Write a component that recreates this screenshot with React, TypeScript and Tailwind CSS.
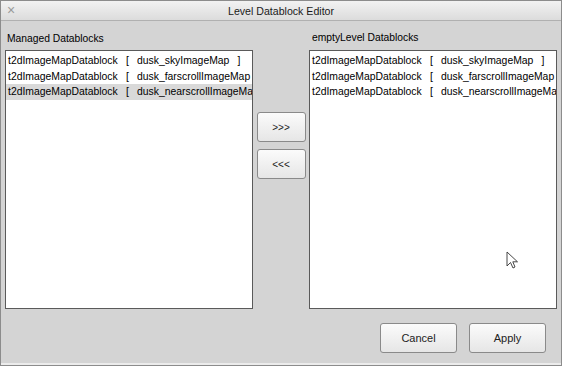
import React from 'react';

const rows = [
  't2dImageMapDatablock  [  dusk_skyImageMap  ]',
  't2dImageMapDatablock  [  dusk_farscrollImageMap  ]',
  't2dImageMapDatablock  [  dusk_nearscrollImageMap  ]',
];

const ListBox: React.FC<{ selected?: number }> = ({ selected }) => (
  <div className="h-[259px] w-[248px] overflow-hidden border border-[#5a5a5a] bg-white pt-[2px]">
    {rows.map((r, i) => (
      <div
        key={i}
        className={`h-[15.5px] whitespace-pre pl-[2px] text-[10.4px] leading-[15px] [word-spacing:1.2px] ${i === selected ? 'bg-[#d9d9d9]' : ''}`}
      >
        {r}
      </div>
    ))}
  </div>
);

const Btn: React.FC<{ label: string; className?: string }> = ({ label, className }) => (
  <button
    className={`rounded-[3px] border border-[#8a8a8a] bg-gradient-to-b from-[#fbfbfb] to-[#e6e6e6] text-[#222] ${className ?? ''}`}
  >
    {label}
  </button>
);

export default function App() {
  return (
    <div
      className="relative flex h-[366px] w-[562px] flex-col border border-[#8c8c8c] bg-[#d4d4d4] text-[10.3px] text-black"
      style={{ fontFamily: '"Liberation Sans", Arial, sans-serif' }}
    >
      {/* title bar */}
      <div className="relative flex h-[20px] items-center justify-center border-b border-[#b0b0b0] bg-gradient-to-b from-[#f2f2f2] to-[#dcdcdc] text-[10.6px] text-[#1a1a1a]">
        <span className="absolute left-[6px] top-[2px] text-[14px] leading-[14px] text-[#9a9a9a]">×</span>
        <span className="mt-[2px]">Level Datablock Editor</span>
      </div>

      <div className="flex px-[4px] pt-[11px]">
        <div className="flex flex-col">
          <div className="mb-[5px] pl-[2px] leading-[13px]">Managed Datablocks</div>
          <ListBox selected={2} />
        </div>
        <div className="flex w-[56px] flex-col items-center pt-[80px]">
          <Btn label=">>>" className="h-[30px] w-[49px] text-[10px]" />
          <Btn label="<<<" className="mt-[7px] h-[30px] w-[49px] text-[10px]" />
        </div>
        <div className="flex flex-col">
          <div className="mb-[6px] -mt-[1px] pl-[3px] leading-[13px]">emptyLevel Datablocks</div>
          <ListBox />
        </div>
      </div>

      <div className="flex justify-end gap-[12px] pr-[15px] pt-[14px]">
        <Btn label="Cancel" className="h-[30px] w-[77px] text-[11px]" />
        <Btn label="Apply" className="h-[30px] w-[77px] text-[11px]" />
      </div>

      <div className="absolute bottom-0 left-0 right-0 h-[2px] bg-[#ececec]" />

      {/* mouse pointer */}
      <svg className="absolute left-[505px] top-[250px]" width="14" height="20" viewBox="0 0 14 20">
        <path d="M1 1 L1 15 L4.5 11.5 L7 17 L9 16 L6.8 10.8 L11.5 10.8 Z" fill="white" stroke="#333" strokeWidth="0.9" strokeLinejoin="round" />
      </svg>
    </div>
  );
}
